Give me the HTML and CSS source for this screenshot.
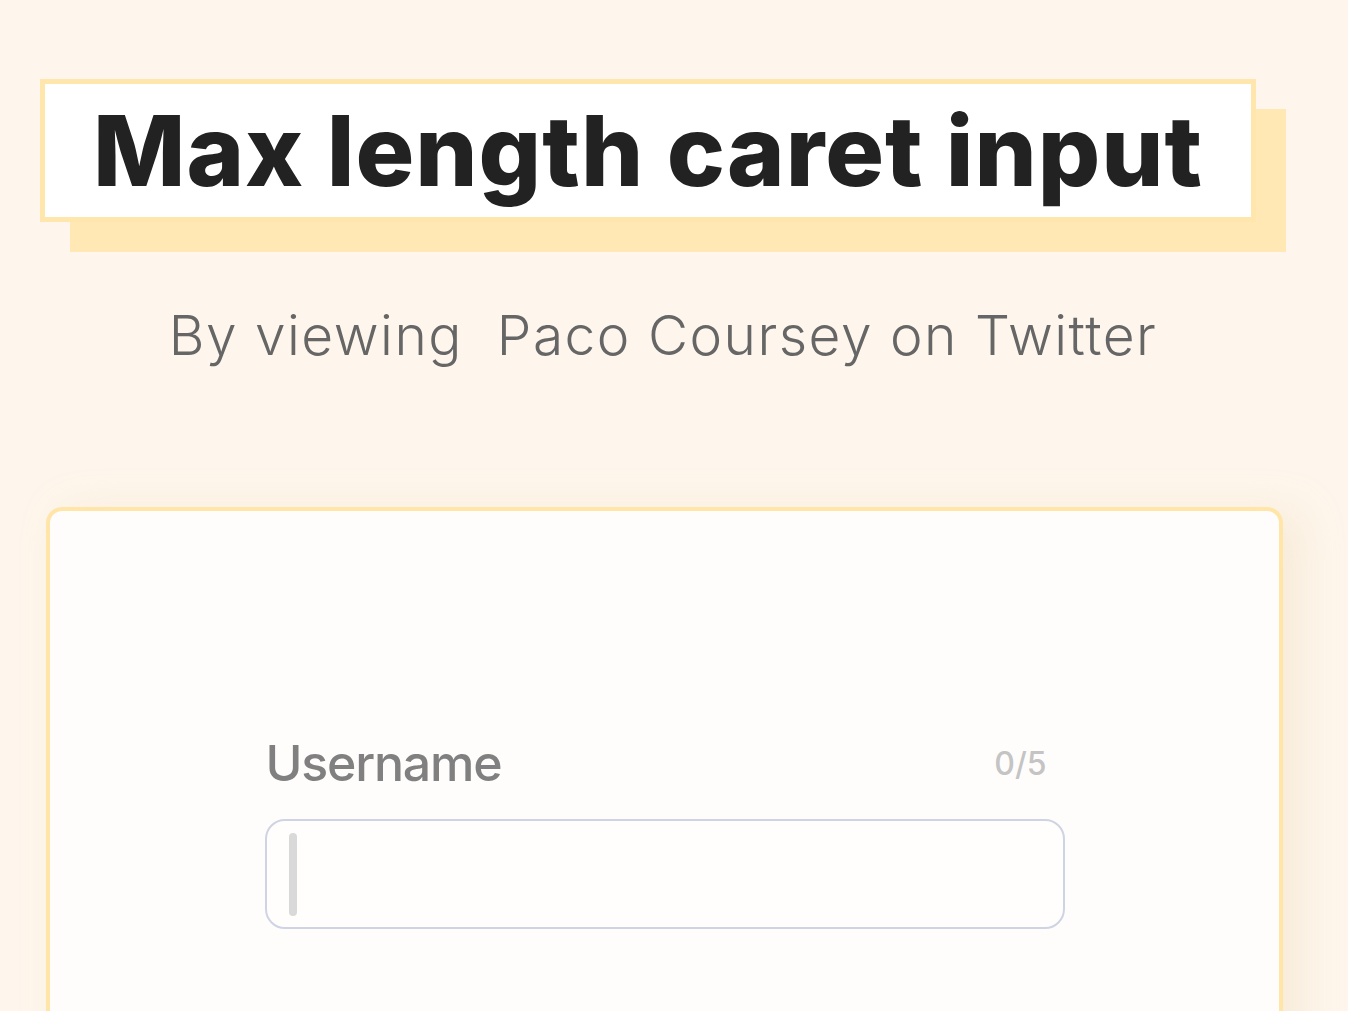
FILE: index.html
```html
<!DOCTYPE html>
<html lang="en">
<head>
<meta charset="UTF-8">
<meta name="viewport" content="width=device-width, initial-scale=1.0">
<title>Max length caret input</title>
<link rel="stylesheet" href="styles.css">
</head>
<body>

<div class="page">
    <h1 class="title">Max length caret input</h1>
    <p class="byline">By viewing&nbsp; Paco Coursey on Twitter</p>

    <div class="card">
        <div class="field">
            <div class="field-head">
                <label class="field-label">Username</label>
                <span class="counter">0/5</span>
            </div>
            <div class="input">
                <span class="caret"></span>
            </div>
        </div>
    </div>
</div>

</body>
</html>
```

FILE: styles.css
```css
html, body {
    margin: 0;
    padding: 0;
    background-color: #fef6ec;
    font-family: Inter, "Noto Sans", sans-serif;
}
.page {
    box-sizing: border-box;
    width: 1348px;
    height: 1011px;
    padding: 79px 0 0 40px;
    overflow: hidden;
}
.title {
    box-sizing: border-box;
    width: 1216px;
    height: 143px;
    margin: 0;
    border: 5px solid #ffe6ad;
    background-color: #ffffff;
    box-shadow: 30px 30px 0 #ffe8b4;
    color: #222222;
    font-size: 98px;
    font-weight: 800;
    letter-spacing: 1px;
    line-height: 133px;
    text-align: center;
}
.byline {
    width: 1246px;
    margin: 80px 0 0 0;
    color: #666666;
    font-size: 55px;
    font-weight: 300;
    letter-spacing: 1.5px;
    line-height: 66px;
    text-align: center;
}
.card {
    box-sizing: border-box;
    width: 1237px;
    height: 600px;
    margin: 139px 0 0 6px;
    padding-top: 222px;
    border: 4px solid #ffe6a8;
    border-radius: 16px;
    background-color: #fffdfb;
    box-shadow: 18px 6px 40px rgba(236, 214, 178, 0.35);
}
.field {
    width: 800px;
    margin: 0 auto;
}
.field-head {
    display: flex;
    align-items: center;
    justify-content: space-between;
    padding: 0 18px 0 1px;
}
.field-label {
    color: #808080;
    font-size: 50px;
    font-weight: 500;
    letter-spacing: -1.2px;
    line-height: 60px;
}
.counter {
    color: #c4c4c4;
    font-size: 32px;
    font-weight: 500;
}
.input {
    box-sizing: border-box;
    display: flex;
    align-items: center;
    height: 110px;
    margin-top: 26px;
    padding-left: 22px;
    border: 2px solid #cfd4e4;
    border-radius: 20px;
    background-color: #fffefd;
}
.caret {
    width: 8px;
    height: 83px;
    border-radius: 4px;
    background-color: #d9d9d9;
}
```
